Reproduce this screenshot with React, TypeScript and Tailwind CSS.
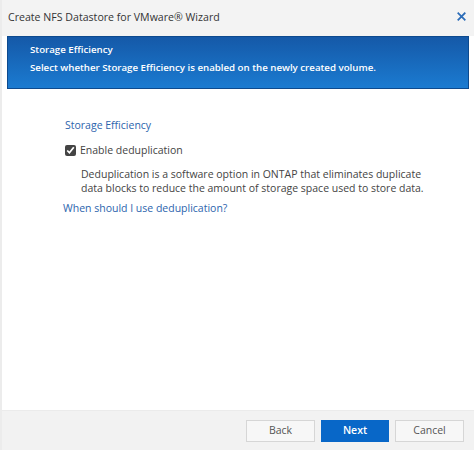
import React, { useState } from 'react';

export default function App() {
  const [dedupe, setDedupe] = useState(true);

  return (
    <div
      className="w-[474px] h-[450px] flex flex-col bg-white border-l-2 border-[#ececec] overflow-hidden"
      style={{ fontFamily: '"Open Sans", "Liberation Sans", sans-serif' }}
    >
      {/* title bar */}
      <div className="h-[36px] flex items-center justify-between bg-[#f3f3f3] pl-[6px] pr-[8px] shrink-0">
        <span className="text-[10.6px] text-[#333]">Create NFS Datastore for VMware® Wizard</span>
        <svg width="9" height="9" viewBox="0 0 10 10" className="mb-[4px]">
          <path d="M1.5 1.5 L8.5 8.5 M8.5 1.5 L1.5 8.5" stroke="#2b6cb8" strokeWidth="2" strokeLinecap="square" />
        </svg>
      </div>

      {/* banner */}
      <div className="mx-[5px] h-[53px] shrink-0 border border-[#0d4a8e] bg-gradient-to-b from-[#1559a8] to-[#1b7bd1] pl-[22px] pt-[4px] text-white text-[9.7px] font-semibold leading-[18px]">
        <div>Storage Efficiency</div>
        <div>Select whether Storage Efficiency is enabled on the newly created volume.</div>
      </div>

      {/* content */}
      <div className="flex-1 pl-[61px] pt-[29px] text-[10.5px] text-[#444]">
        <div className="text-[#2c64ad] mb-[9px] pl-[2px]">Storage Efficiency</div>
        <label className="flex items-center gap-[4px] pl-[2px]">
          <input
            type="checkbox"
            checked={dedupe}
            onChange={(e) => setDedupe(e.target.checked)}
            className="w-[11px] h-[11px] accent-[#444]"
          />
          <span className="text-[#444]">Enable deduplication</span>
        </label>
        <p className="pl-[18px] mt-[8px] leading-[14px] text-[#444]">
          Deduplication is a software option in ONTAP that eliminates duplicate
          <br />
          data blocks to reduce the amount of storage space used to store data.
        </p>
        <a className="block mt-[6px] text-[#2c64ad]">When should I use deduplication?</a>
      </div>

      {/* footer */}
      <div className="h-[40px] shrink-0 bg-[#f2f2f2] border-t border-[#ebebeb] flex items-center justify-end gap-[6px] pr-[10px] text-[10.5px]">
        <button className="w-[69px] h-[22px] bg-[#f7f7f7] border border-[#d6d6d6] text-[#555]">Back</button>
        <button className="w-[68px] h-[22px] bg-[#0867c8] border border-[#0867c8] text-white font-semibold">Next</button>
        <button className="w-[69px] h-[22px] bg-[#f7f7f7] border border-[#d6d6d6] text-[#555]">Cancel</button>
      </div>
    </div>
  );
}
